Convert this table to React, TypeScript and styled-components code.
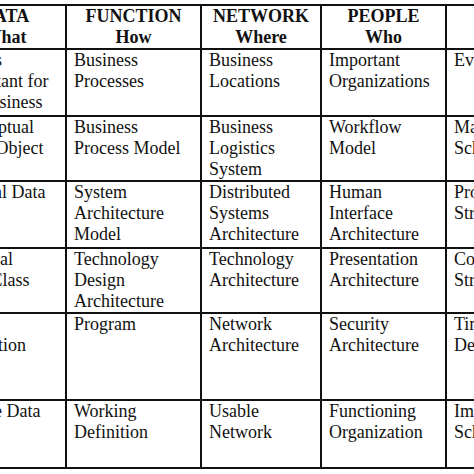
import * as React from 'react';
import styled, { createGlobalStyle } from 'styled-components';

const GlobalStyle = createGlobalStyle`
    html, body {
        margin: 0;
        padding: 0;
        background: #ffffff;
    }
`;

const INK = '#111111';

const Page = styled.div`
    width: 474px;
    height: 474px;
    overflow: hidden;
    background: #ffffff;
    padding-top: 4px;
    box-sizing: border-box;
`;

const Grid = styled.table`
    margin-left: -57px;
    border-collapse: collapse;
    table-layout: fixed;
    width: 622px;
    font-family: "Liberation Serif", "Times New Roman", serif;
    font-size: 18px;
    line-height: 21px;
    color: ${INK};
`;

const Col = styled.col<{ $w: number }>`
    width: ${(p) => p.$w}px;
`;

const Row = styled.tr<{ $h?: number }>`
    height: ${(p) => (p.$h ? `${p.$h}px` : 'auto')};
`;

const HeadCell = styled.th`
    border: 2px solid ${INK};
    padding: 0 4px;
    font-weight: bold;
    text-align: center;
    vertical-align: top;
`;

const Cell = styled.td`
    border: 2px solid ${INK};
    padding: 0 7px;
    text-align: left;
    vertical-align: top;
`;

const columns = [
    { title: 'DATA', sub: 'What', width: 122 },
    { title: 'FUNCTION', sub: 'How', width: 135 },
    { title: 'NETWORK', sub: 'Where', width: 120 },
    { title: 'PEOPLE', sub: 'Who', width: 125 },
    { title: 'TIME', sub: 'When', width: 120 },
];

const rows: { h: number; cells: string[][] }[] = [
    {
        h: 67,
        cells: [
            ['Things', 'Important for', 'the Business'],
            ['Business Processes'],
            ['Business Locations'],
            ['Important Organizations'],
            ['Events'],
        ],
    },
    {
        h: 65,
        cells: [
            ['Conceptual', 'Data/ Object', 'Model'],
            ['Business Process Model'],
            ['Business Logistics System'],
            ['Workflow Model'],
            ['Master Schedule'],
        ],
    },
    {
        h: 67,
        cells: [
            ['Logical Data', 'Model'],
            ['System Architecture Model'],
            ['Distributed Systems Architecture'],
            ['Human Interface Architecture'],
            ['Processing Structure'],
        ],
    },
    {
        h: 64,
        cells: [
            ['Physical', 'Data Class', 'Model'],
            ['Technology Design Architecture'],
            ['Technology Architecture'],
            ['Presentation Architecture'],
            ['Control Structure'],
        ],
    },
    {
        h: 87,
        cells: [
            ['Data', 'Definition'],
            ['Program'],
            ['Network Architecture'],
            ['Security Architecture'],
            ['Timing Definition'],
        ],
    },
    {
        h: 68,
        cells: [
            ['Usable Data'],
            ['Working Definition'],
            ['Usable Network'],
            ['Functioning Organization'],
            ['Implemented Schedule'],
        ],
    },
];

const Lines = ({ lines }: { lines: string[] }) => (
    <>
        {lines.map((line, i) => (
            <React.Fragment key={i}>
                {i > 0 && <br />}
                {line}
            </React.Fragment>
        ))}
    </>
);

export default function App() {
    return (
        <Page>
            <GlobalStyle />
            <Grid>
                <colgroup>
                    {columns.map((c) => <Col key={c.title} $w={c.width} />)}
                </colgroup>
                <thead>
                    <Row $h={44}>
                        {columns.map((c) => (
                            <HeadCell key={c.title}>
                                {c.title}
                                <br />
                                {c.sub}
                            </HeadCell>
                        ))}
                    </Row>
                </thead>
                <tbody>
                    {rows.map((r, i) => (
                        <Row key={i} $h={r.h}>
                            {r.cells.map((lines, j) => (
                                <Cell key={j}>
                                    <Lines lines={lines} />
                                </Cell>
                            ))}
                        </Row>
                    ))}
                </tbody>
            </Grid>
        </Page>
    );
}
